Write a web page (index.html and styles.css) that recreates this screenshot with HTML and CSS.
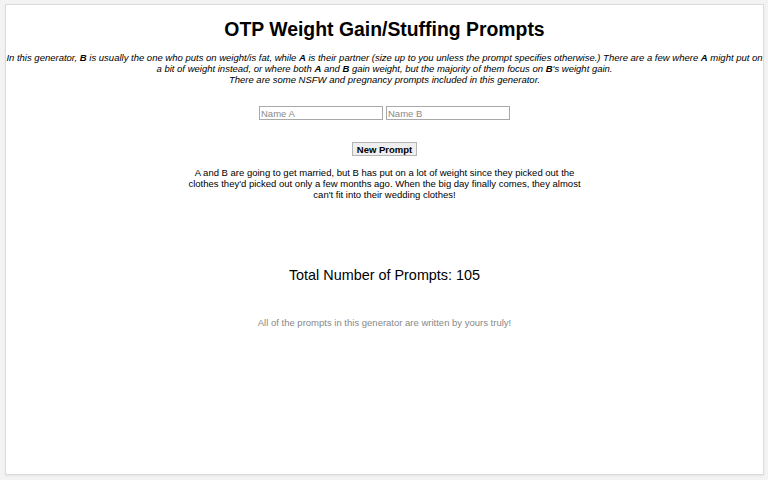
FILE: index.html
```html
<!DOCTYPE html>
<html lang="en">
<head>
    <meta charset="UTF-8">
    <meta name="viewport" content="width=device-width, initial-scale=1.0">
    <title>OTP Weight Gain/Stuffing Prompts</title>
    <link rel="stylesheet" href="styles.css">
</head>
<body>

<div class="page">
    <h1>OTP Weight Gain/Stuffing Prompts</h1>
    <p class="intro">
        In this generator, <b>B</b> is usually the one who puts on weight/is fat, while <b>A</b> is their partner (size up to you unless the prompt specifies otherwise.) There are a few where <b>A</b> might put on a bit of weight instead, or where both <b>A</b> and <b>B</b> gain weight, but the majority of them focus on <b>B</b>'s weight gain.<br>
        There are some NSFW and pregnancy prompts included in this generator.
    </p>

    <div class="names">
        <input type="text" id="nameA" placeholder="Name A">
        <input type="text" id="nameB" placeholder="Name B">
    </div>

    <button onclick="newPrompt()">New Prompt</button>

    <p class="prompt" id="prompt">A and B are going to get married, but B has put on a lot of weight since they picked out the clothes they'd picked out only a few months ago. When the big day finally comes, they almost can't fit into their wedding clothes!</p>

    <p class="total">Total Number of Prompts: <span id="total">105</span></p>

    <p class="credit">All of the prompts in this generator are written by yours truly!</p>
</div>

<script>
    const prompts = [
        "A and B are going to get married, but B has put on a lot of weight since they picked out the clothes they'd picked out only a few months ago. When the big day finally comes, they almost can't fit into their wedding clothes!",
        "A takes B out to an all-you-can-eat buffet and dares them to try everything on the menu.",
        "B finds out their favourite jeans don't button anymore, and A has to help them squeeze in."
    ];

    function newPrompt() {
        const a = document.getElementById('nameA').value || 'A';
        const b = document.getElementById('nameB').value || 'B';
        let text = prompts[Math.floor(Math.random() * prompts.length)];
        text = text.replace(/\bA\b/g, '@@A').replace(/\bB\b/g, b).replace(/@@A/g, a);
        document.getElementById('prompt').textContent = text;
    }
</script>

</body>
</html>
```

FILE: styles.css
```css
body {
    margin: 0;
    padding: 4px 4px 4px 5px;
    background-color: #f3f3f3;
    font-family: "Liberation Sans", Arial, sans-serif;
    color: #000;
}
.page {
    height: 469px;
    background-color: #fff;
    border: 1px solid #dcdcdc;
    box-shadow: 0 1px 2px rgba(0, 0, 0, 0.06);
    text-align: center;
}
h1 {
    font-size: 19.4px;
    line-height: 22px;
    margin: 13px 0 0;
}
.intro {
    font-size: 9.5px;
    font-style: italic;
    line-height: 11px;
    margin: 12px 0 0;
}
.names {
    display: flex;
    justify-content: center;
    gap: 3px;
    margin-top: 21px;
}
.names input {
    width: 120px;
    height: 12px;
    padding: 0 1px;
    margin: 0;
    border: 1px solid #a9a9a9;
    font-family: "Liberation Sans", Arial, sans-serif;
    font-size: 9.5px;
}
.names input::placeholder {
    color: #8a8a8a;
}
button {
    margin-top: 22px;
    padding: 0 4px;
    height: 14px;
    font-family: "Liberation Sans", Arial, sans-serif;
    font-size: 9.5px;
    font-weight: bold;
    background-color: #efefef;
    border: 1px solid #b5b5b5;
    border-radius: 0;
}
.prompt {
    max-width: 400px;
    margin: 10px auto 0;
    font-size: 9.5px;
    line-height: 11px;
}
.total {
    font-size: 14.4px;
    margin: 67px 0 0;
}
.credit {
    font-size: 9.5px;
    color: #888;
    margin: 34px 0 0;
}
```
